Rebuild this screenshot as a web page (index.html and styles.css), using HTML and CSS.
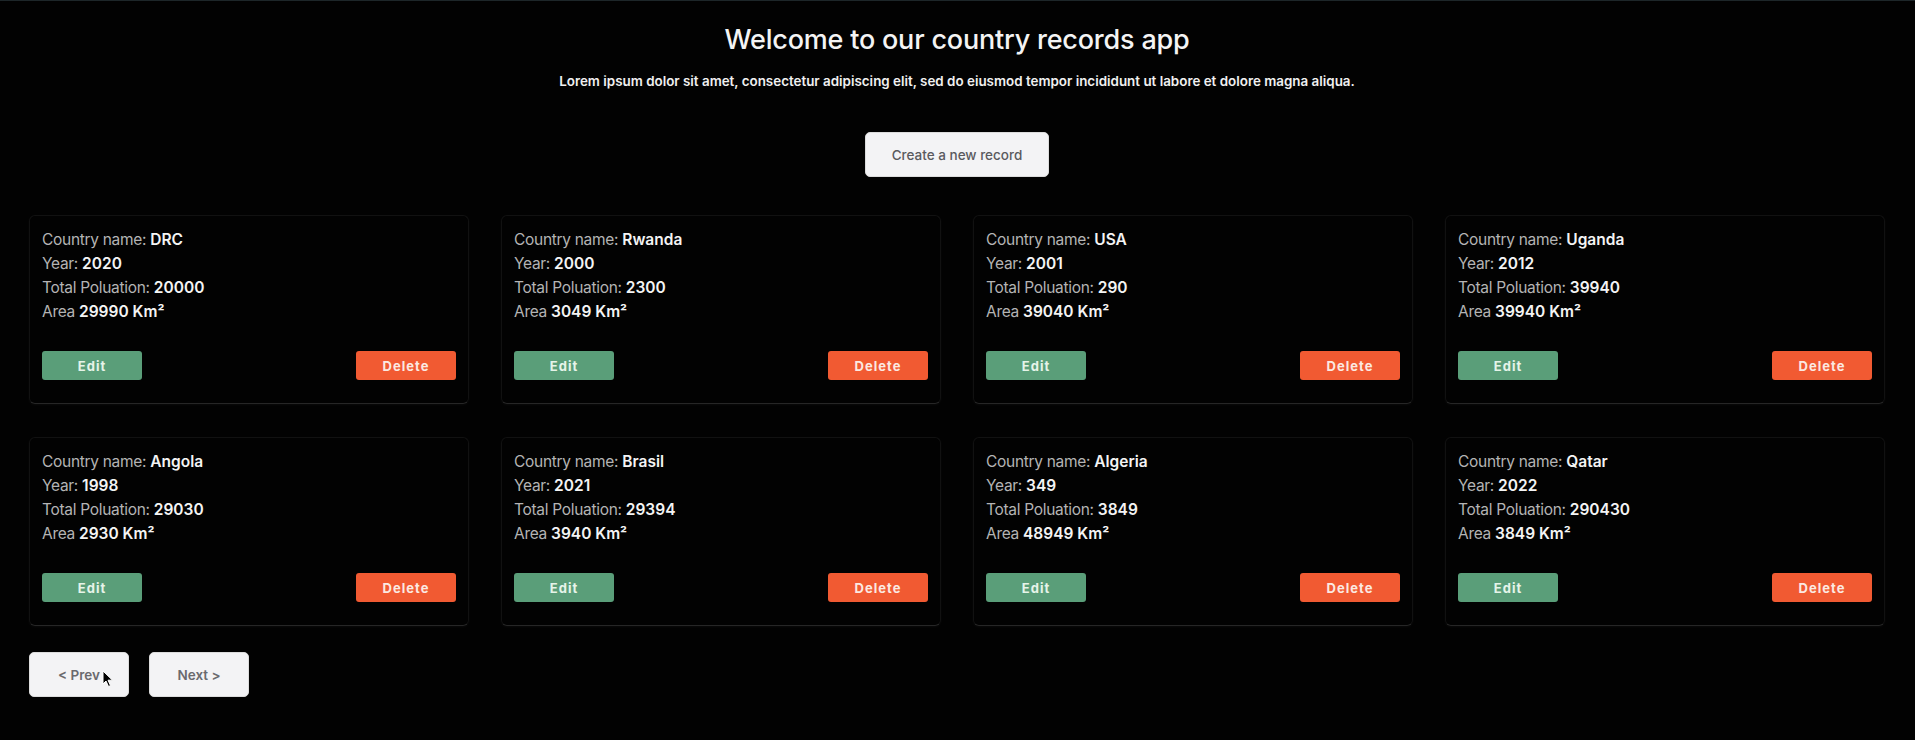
FILE: index.html
```html
<!DOCTYPE html>
<html lang="en">
<head>
<meta charset="utf-8">
<title>Country records</title>
<link rel="stylesheet" href="styles.css">
</head>
<body>
<div class="page">
  <header class="hero">
    <h1 class="title">Welcome to our country records app</h1>
    <p class="lead">Lorem ipsum dolor sit amet, consectetur adipiscing elit, sed do eiusmod tempor incididunt ut labore et dolore magna aliqua.</p>
    <button class="btn-light btn-create">Create a new record</button>
  </header>

  <main class="grid">
    <div class="card">
      <div class="info">
        <div>Country name: <b>DRC</b></div>
        <div>Year: <b>2020</b></div>
        <div>Total Poluation: <b>20000</b></div>
        <div>Area <b>29990 Km²</b></div>
      </div>
      <div class="actions"><button class="btn edit">Edit</button><button class="btn del">Delete</button></div>
    </div>
    <div class="card">
      <div class="info">
        <div>Country name: <b>Rwanda</b></div>
        <div>Year: <b>2000</b></div>
        <div>Total Poluation: <b>2300</b></div>
        <div>Area <b>3049 Km²</b></div>
      </div>
      <div class="actions"><button class="btn edit">Edit</button><button class="btn del">Delete</button></div>
    </div>
    <div class="card">
      <div class="info">
        <div>Country name: <b>USA</b></div>
        <div>Year: <b>2001</b></div>
        <div>Total Poluation: <b>290</b></div>
        <div>Area <b>39040 Km²</b></div>
      </div>
      <div class="actions"><button class="btn edit">Edit</button><button class="btn del">Delete</button></div>
    </div>
    <div class="card">
      <div class="info">
        <div>Country name: <b>Uganda</b></div>
        <div>Year: <b>2012</b></div>
        <div>Total Poluation: <b>39940</b></div>
        <div>Area <b>39940 Km²</b></div>
      </div>
      <div class="actions"><button class="btn edit">Edit</button><button class="btn del">Delete</button></div>
    </div>
    <div class="card">
      <div class="info">
        <div>Country name: <b>Angola</b></div>
        <div>Year: <b>1998</b></div>
        <div>Total Poluation: <b>29030</b></div>
        <div>Area <b>2930 Km²</b></div>
      </div>
      <div class="actions"><button class="btn edit">Edit</button><button class="btn del">Delete</button></div>
    </div>
    <div class="card">
      <div class="info">
        <div>Country name: <b>Brasil</b></div>
        <div>Year: <b>2021</b></div>
        <div>Total Poluation: <b>29394</b></div>
        <div>Area <b>3940 Km²</b></div>
      </div>
      <div class="actions"><button class="btn edit">Edit</button><button class="btn del">Delete</button></div>
    </div>
    <div class="card">
      <div class="info">
        <div>Country name: <b>Algeria</b></div>
        <div>Year: <b>349</b></div>
        <div>Total Poluation: <b>3849</b></div>
        <div>Area <b>48949 Km²</b></div>
      </div>
      <div class="actions"><button class="btn edit">Edit</button><button class="btn del">Delete</button></div>
    </div>
    <div class="card">
      <div class="info">
        <div>Country name: <b>Qatar</b></div>
        <div>Year: <b>2022</b></div>
        <div>Total Poluation: <b>290430</b></div>
        <div>Area <b>3849 Km²</b></div>
      </div>
      <div class="actions"><button class="btn edit">Edit</button><button class="btn del">Delete</button></div>
    </div>
  </main>

  <nav class="pager">
    <button class="btn-light btn-page prev">&lt; Prev
      <svg class="cursor" width="12" height="18" viewBox="0 0 12 18"><path d="M1 1 L1 14 L4 11 L6.5 16.5 L8.5 15.6 L6 10.2 L10.5 10.2 Z" fill="#000" stroke="#fff" stroke-width="1"/></svg>
    </button>
    <button class="btn-light btn-page">Next &gt;</button>
  </nav>
</div>
</body>
</html>
```

FILE: styles.css
```css
* { box-sizing: border-box; }

html, body {
  margin: 0;
  padding: 0;
  background: #020202;
  height: 100%;
}

body {
  font-family: Inter, "Liberation Sans", sans-serif;
  color: #f2f2f2;
  border-top: 1px solid #1d2629;
}

.page {
  padding: 0 30px 0 29px;
}

.hero {
  display: flex;
  flex-direction: column;
  align-items: center;
}

.title {
  margin: 22px 0 0;
  font-size: 27px;
  line-height: 34px;
  font-weight: 500;
  color: #f4f4f4;
  letter-spacing: -0.2px;
}

.lead {
  margin: 16px 0 0;
  font-size: 13.4px;
  line-height: 17px;
  font-weight: 600;
  color: #f0f0f0;
}

.btn-light {
  background: #f3f3f5;
  border: 1px solid #dcdcdc;
  border-radius: 5px;
  font-family: Inter, "Liberation Sans", sans-serif;
  color: #5a5a5e;
  cursor: pointer;
}

.btn-create {
  margin-top: 42px;
  width: 184px;
  height: 45px;
  font-size: 13.5px;
  font-weight: 500;
}

.grid {
  margin-top: 38px;
  display: grid;
  grid-template-columns: repeat(4, 1fr);
  column-gap: 32px;
  row-gap: 33px;
}

.card {
  border: 1px solid #111;
  border-bottom-color: #262626;
  border-radius: 6px;
  padding: 12px 12px 23px;
  box-shadow: 0 1px 3px rgba(255, 255, 255, 0.04);
}

.info {
  font-size: 15.5px;
  line-height: 24px;
  color: #b4b4b4;
  letter-spacing: -0.3px;
}

.info b {
  color: #f4f4f4;
  font-weight: 600;
  letter-spacing: 0;
}

.actions {
  margin-top: 27px;
  display: flex;
  justify-content: space-between;
}

.btn {
  width: 100px;
  height: 29px;
  border: none;
  border-radius: 3px;
  font-family: Inter, "Liberation Sans", sans-serif;
  font-size: 13px;
  font-weight: 700;
  letter-spacing: 1px;
  cursor: pointer;
}

.edit {
  background: #5a9e79;
  color: #e6f4e9;
}

.del {
  background: #f15a32;
  color: #fbe9e2;
}

.pager {
  margin-top: 26px;
  display: flex;
  gap: 20px;
}

.btn-page {
  position: relative;
  width: 100px;
  height: 45px;
  font-size: 13.5px;
  font-weight: 600;
  color: #6a6a6e;
}

.cursor {
  position: absolute;
  left: 72px;
  top: 17px;
}
```
